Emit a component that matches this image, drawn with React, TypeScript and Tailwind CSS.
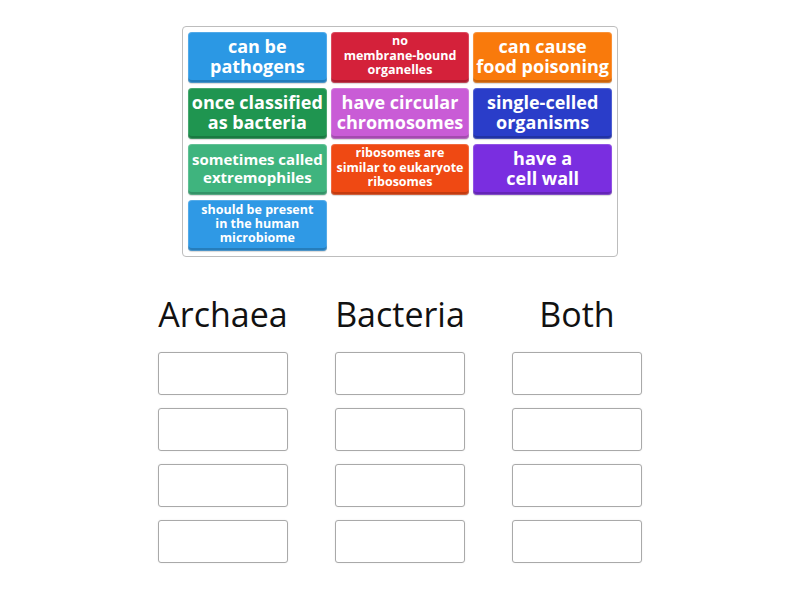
import React from 'react';

type Tile = { text: string[]; bg: string; size: string };

// cards waiting to be sorted
const tiles: Tile[] = [
    { text: ['can be', 'pathogens'], bg: 'bg-[#2b98e4]', size: 'text-[18px] leading-[20px]' },
    { text: ['no', 'membrane-bound', 'organelles'], bg: 'bg-[#d4213a]', size: 'text-[12.5px] leading-[14.5px]' },
    { text: ['can cause', 'food poisoning'], bg: 'bg-[#f97a0c]', size: 'text-[18px] leading-[20px]' },
    { text: ['once classified', 'as bacteria'], bg: 'bg-[#1f9550]', size: 'text-[18px] leading-[20px]' },
    { text: ['have circular', 'chromosomes'], bg: 'bg-[#c95cd6]', size: 'text-[18px] leading-[20px]' },
    { text: ['single-celled', 'organisms'], bg: 'bg-[#2a3dc9]', size: 'text-[18px] leading-[20px]' },
    { text: ['sometimes called', 'extremophiles'], bg: 'bg-[#3fb47e]', size: 'text-[15px] leading-[18px]' },
    { text: ['ribosomes are', 'similar to eukaryote', 'ribosomes'], bg: 'bg-[#ef4913]', size: 'text-[12.5px] leading-[14.5px]' },
    { text: ['have a', 'cell wall'], bg: 'bg-[#7a2ee0]', size: 'text-[18px] leading-[20px]' },
    { text: ['should be present', 'in the human', 'microbiome'], bg: 'bg-[#2f99e5]', size: 'text-[12.5px] leading-[14px]' },
];

const groups = ['Archaea', 'Bacteria', 'Both'];

export default function App() {
    return (
        <div className="w-full min-h-[600px] bg-white flex flex-col items-center pt-[26px]" style={{ fontFamily: '"Open Sans", "Liberation Sans", sans-serif' }}>
            {/* ── Tile tray ── */}
            <div className="w-[436px] border border-[#bdbdbd] rounded-[4px] p-[5px] grid grid-cols-3 gap-x-[4px] gap-y-[5px]">
                {tiles.map((t, i) => (
                    <div
                        key={i}
                        className={`${t.bg} h-[51px] pb-[3px] rounded-[4px] flex flex-col items-center justify-center text-white font-bold text-center shadow-[inset_0_0_0_1px_rgba(255,255,255,0.18),inset_0_-3px_0_rgba(0,0,0,0.18),0_1px_1px_rgba(0,0,0,0.15)] ${t.size}`}
                    >
                        {t.text.map((line, j) => (
                            <span key={j} className="whitespace-nowrap">{line}</span>
                        ))}
                    </div>
                ))}
            </div>

            {/* ── Drop columns ── */}
            <div className="mt-[35px] flex gap-[47px]">
                {groups.map((g) => (
                    <div key={g} className="w-[130px] flex flex-col items-center">
                        <h2 className="h-[46px] leading-[44px] text-[34px] text-[#111] font-normal whitespace-nowrap">{g}</h2>
                        <div className="mt-[14px] w-full flex flex-col gap-[13px]">
                            {[0, 1, 2, 3].map((k) => (
                                <div key={k} className="h-[43px] w-full border border-[#a9a9a9] rounded-[3px] bg-white shadow-[0_0_2px_rgba(0,0,0,0.08)]" />
                            ))}
                        </div>
                    </div>
                ))}
            </div>
        </div>
    );
}
